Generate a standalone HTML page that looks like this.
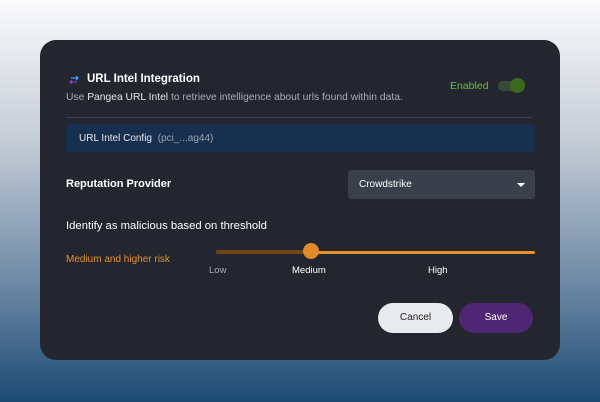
<!DOCTYPE html>
<html><head><style>
*{margin:0;padding:0;box-sizing:border-box}
body{width:600px;height:402px;overflow:hidden;font-family:"Liberation Sans",sans-serif;background:linear-gradient(180deg,#fbfbfc 0%,#c4ccd6 35%,#6e8aa6 70%,#1d4a74 100%);position:relative}
.card{position:absolute;left:40px;top:40px;width:520px;height:320px;background:#23262f;border-radius:16px}
.a{position:absolute;white-space:nowrap}
</style></head><body>
<div class="card">
<svg class="a" style="left:28px;top:35px" width="12" height="10" viewBox="0 0 12 10"><path d="M3 3h7M8 1l2 2-2 2" stroke="#3aa0ff" stroke-width="1.3" fill="none"/><path d="M9 7H2M4 5L2 7l2 2" stroke="#7a3fc0" stroke-width="1.3" fill="none"/></svg>
<div class="a" style="left:47px;top:33px;font-size:11.5px;font-weight:bold;color:#fff">URL Intel Integration</div>
<div class="a" style="left:26px;top:52px;font-size:10.3px;color:#a8adb8">Use <span style="color:#e6e8ec">Pangea URL Intel</span> to retrieve intelligence about urls found within data.</div>
<div class="a" style="left:410px;top:40px;font-size:10.5px;color:#6abf3a">Enabled</div>
<div class="a" style="left:458px;top:41px;width:26px;height:10px;border-radius:5px;background:#3a4a3a"></div>
<div class="a" style="left:470px;top:38px;width:15px;height:15px;border-radius:50%;background:#3b6a1e"></div>
<div class="a" style="left:26px;top:77px;width:466px;height:1px;background:#3c404a"></div>
<div class="a" style="left:26px;top:84px;width:469px;height:28px;border-radius:3px;background:#18304f"></div>
<div class="a" style="left:39px;top:93px;font-size:10px;color:#e6e8ec">URL Intel Config <span style="color:#9aa3b0;margin-left:3px">(pci_...ag44)</span></div>
<div class="a" style="left:26px;top:138px;font-size:11px;font-weight:bold;color:#fff">Reputation Provider</div>
<div class="a" style="left:308px;top:130px;width:187px;height:29px;border-radius:3px;background:#39404c"></div>
<div class="a" style="left:319px;top:139px;font-size:10px;color:#fff">Crowdstrike</div>
<div class="a" style="left:477px;top:143px;width:0;height:0;border-left:4px solid transparent;border-right:4px solid transparent;border-top:4px solid #fff"></div>
<div class="a" style="left:26px;top:180px;font-size:11.3px;color:#fff">Identify as malicious based on threshold</div>
<div class="a" style="left:26px;top:214px;font-size:10px;color:#e8902a">Medium and higher risk</div>
<div class="a" style="left:176px;top:210px;width:96px;height:4px;background:#6e4418;border-radius:2px"></div>
<div class="a" style="left:272px;top:211px;width:223px;height:3px;background:#e8902a;border-radius:2px"></div>
<div class="a" style="left:263px;top:203px;width:16px;height:16px;border-radius:50%;background:#e08a2c"></div>
<div class="a" style="left:169px;top:225px;font-size:9.5px;color:#a8adb8">Low</div>
<div class="a" style="left:252px;top:225px;font-size:9.5px;color:#fff">Medium</div>
<div class="a" style="left:388px;top:225px;font-size:9.5px;color:#fff">High</div>
<div class="a" style="left:338px;top:263px;width:75px;height:30px;border-radius:15px;background:#e8eaee;font-size:10px;color:#222;text-align:center;line-height:30px">Cancel</div>
<div class="a" style="left:419px;top:263px;width:74px;height:30px;border-radius:15px;background:#4f2672;font-size:10px;color:#fff;text-align:center;line-height:30px">Save</div>
</div>
</body></html>
